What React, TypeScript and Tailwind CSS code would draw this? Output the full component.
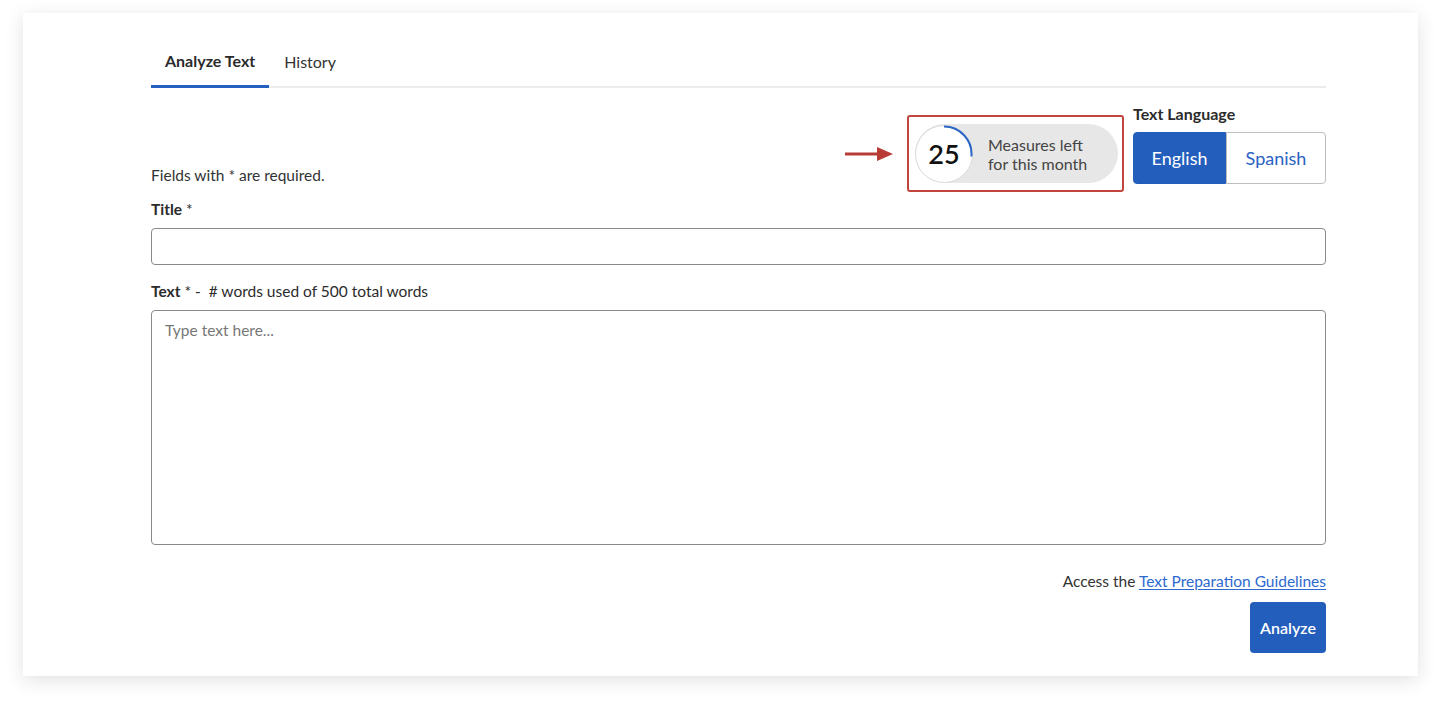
import { useState } from 'react';

export default function App() {
  const [lang, setLang] = useState<'en' | 'es'>('en');

  return (
    <div className="min-h-screen bg-white pt-[13px] px-[22px] pl-[23px] font-['Lato','Open_Sans',sans-serif] text-[#333]">
      <div className="bg-white shadow-[0_4px_18px_rgba(0,0,0,0.12)] pt-[25px] pb-[23px] pl-[128px] pr-[92px]">
        {/* Tabs */}
        <div className="flex border-b-2 border-[#ececec]">
          <button className="px-[14px] pt-[11px] pb-[12px] border-b-[3px] border-[#2460c0] -mb-[2px] text-[16px] leading-[24px] font-bold text-[#2b2b2b]">
            Analyze Text
          </button>
          <button className="px-[15px] pt-[11px] pb-[12px] text-[16px] leading-[24px] text-[#333]">History</button>
        </div>

        {/* Header row */}
        <div className="flex items-end justify-between pt-[16px]">
          <p className="pb-[7px] text-[15.5px] leading-[20px] text-[#333]">Fields with * are required.</p>
          <div className="flex items-start gap-[9px]">
            <div className="flex items-center mt-[11px]">
              <svg width="52" height="16" viewBox="0 0 52 16" className="mr-[12px]">
                <line x1="2" y1="8" x2="36" y2="8" stroke="#b83c35" strokeWidth="3" />
                <polygon points="34,1 50,8 34,15" fill="#b83c35" />
              </svg>
              <div className="border-2 border-[#c0453d] rounded-[3px] pl-[6px] pr-[4px] py-[7px]">
                <div className="flex items-center w-[203px] h-[59px] rounded-full bg-[#e7e7e7]">
                  <div className="relative w-[58px] h-[58px] rounded-full bg-white border border-[#dcdcdc] flex items-center justify-center">
                    <svg width="58" height="58" viewBox="0 0 58 58" className="absolute -inset-px">
                      <path d="M29 1.5 A27.5 27.5 0 0 1 56.4 31.5" fill="none" stroke="#2a66c6" strokeWidth="2" />
                    </svg>
                    <span className="text-[27px] leading-none font-semibold text-[#111]">25</span>
                  </div>
                  <div className="ml-[15px] text-[16px] leading-[19px] text-[#444]">
                    Measures left
                    <br />
                    for this month
                  </div>
                </div>
              </div>
            </div>
            <div>
              <div className="text-[16px] leading-[20px] font-bold text-[#2b2b2b] mb-[8px]">Text Language</div>
              <div className="flex h-[52px]">
                <button
                  onClick={() => setLang('en')}
                  className={`w-[93px] rounded-l-[4px] text-[18px] border ${lang === 'en' ? 'bg-[#235ebd] border-[#235ebd] text-white' : 'bg-white border-[#bdbdbd] text-[#2a63c2]'}`}
                >
                  English
                </button>
                <button
                  onClick={() => setLang('es')}
                  className={`w-[100px] rounded-r-[4px] text-[18px] border ${lang === 'es' ? 'bg-[#235ebd] border-[#235ebd] text-white' : 'bg-white border-[#bdbdbd] text-[#2a63c2]'}`}
                >
                  Spanish
                </button>
              </div>
            </div>
          </div>
        </div>

        {/* Title */}
        <label className="block mt-[7px] mb-[9px] text-[15.5px] leading-[20px] text-[#2b2b2b]">
          <span className="font-bold">Title</span> *
        </label>
        <input className="block w-full h-[37px] rounded-[4px] border border-[#8a8a8a] px-[13px] text-[15px] outline-none" />

        {/* Text */}
        <label className="block mt-[16px] mb-[9px] text-[15.5px] leading-[20px] text-[#2b2b2b]">
          <span className="font-bold">Text</span> * -&nbsp; # words used of 500 total words
        </label>
        <textarea
          placeholder="Type text here..."
          className="block w-full h-[235px] resize-none rounded-[4px] border border-[#8a8a8a] px-[13px] py-[9px] text-[15.5px] leading-[20px] outline-none placeholder:text-[#777]"
        />

        {/* Footer */}
        <div className="flex flex-col items-end">
          <p className="mt-[26px] text-[15.5px] leading-[20px] text-[#333]">
            Access the{' '}
            <a href="#" className="text-[#2d6ad0] underline underline-offset-2">
              Text Preparation Guidelines
            </a>
          </p>
          <button className="mt-[11px] w-[76px] h-[51px] rounded-[4px] bg-[#235ebd] text-white text-[16px] font-semibold">
            Analyze
          </button>
        </div>
      </div>
    </div>
  );
}
